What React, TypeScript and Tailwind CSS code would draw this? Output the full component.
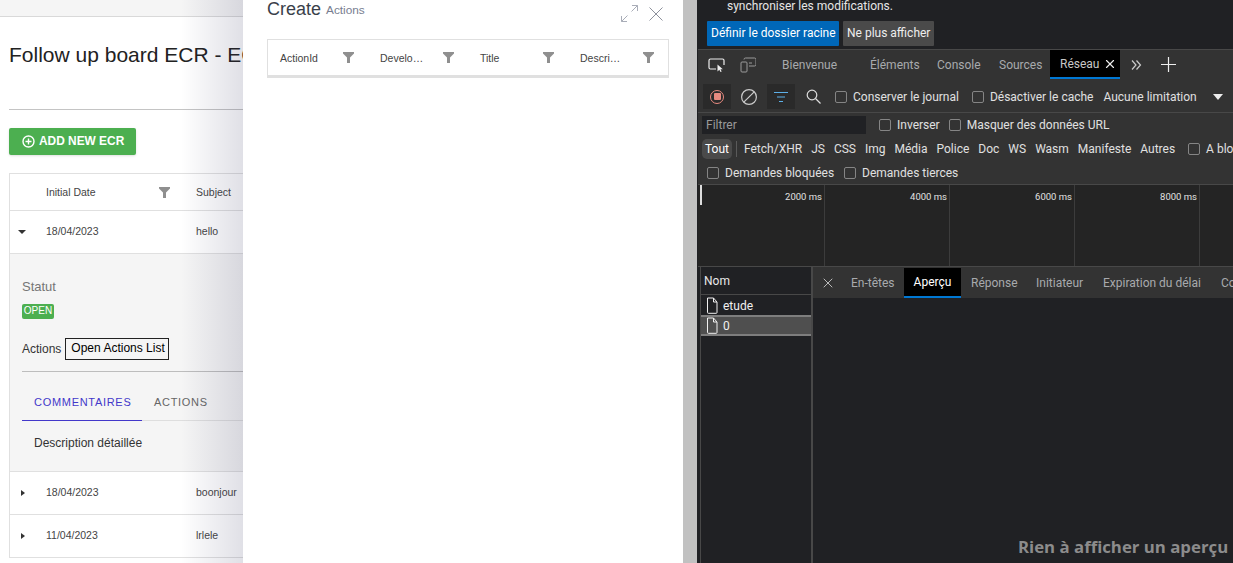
import { X } from "lucide-react";

function Funnel({ className = "" }: { className?: string }) {
  return (
    <svg width="11" height="11" viewBox="0 0 11 11" className={className}>
      <path d="M0 0h11v1.5L7 5.5V11H4V5.5L0 1.5z" fill="#8f8f8f" />
    </svg>
  );
}

function Check({ label }: { label: string }) {
  return (
    <label className="flex items-center gap-[6px] whitespace-nowrap">
      <span className="w-[12px] h-[12px] rounded-[2px] border border-[#858585] shrink-0" />
      {label}
    </label>
  );
}

function FileIcon() {
  return (
    <svg width="12" height="17" viewBox="0 0 12 17" fill="none" stroke="#f0f0f0" strokeWidth="1" className="shrink-0">
      <path d="M1.5 1h6l3.5 4v10.5a.8.8 0 0 1-.8.8H2.3a.8.8 0 0 1-.8-.8z" />
      <path d="M7.5 1v4H11" />
    </svg>
  );
}

function Row({ date, subject, open }: { date: string; subject: string; open?: boolean }) {
  return (
    <div className="h-[43px] shrink-0 flex items-center border-b border-[#e0e0e0] bg-white">
      <div className="w-[36px] pl-[8px] shrink-0">
        {open ? (
          <div className="w-0 h-0 border-x-[4px] border-x-transparent border-t-[4px] border-t-[#333]" />
        ) : (
          <div className="ml-[3px] w-0 h-0 border-y-[3px] border-y-transparent border-l-[4px] border-l-[#333]" />
        )}
      </div>
      <div className="w-[150px] shrink-0 text-[#444]">{date}</div>
      <div className="text-[#444]">{subject}</div>
    </div>
  );
}

function PageBehind() {
  return (
    <div className="w-[243px] shrink-0 relative overflow-hidden bg-white font-['Liberation_Sans',sans-serif] text-[10.5px]">
      <div className="w-[500px]">
        <div className="h-[17px] bg-[#f5f5f5] border-b border-[#d9d9d9]" />
        <h1 className="mt-[26px] pl-[9px] h-[24px] leading-[24px] text-[21px] text-[#222] whitespace-nowrap">
          Follow up board ECR - ECR
        </h1>
        <div className="mt-[42px] ml-[9px] border-t border-[#c4c4c4]" />
        <button className="mt-[18px] ml-[9px] w-[127px] h-[27px] bg-[#4caf50] rounded-[2px] shadow-sm text-white font-bold text-[11.9px] flex items-center pl-[13px] gap-[4px]">
          <svg width="13" height="13" viewBox="0 0 13 13" fill="none" stroke="white" strokeWidth="1.4">
            <circle cx="6.5" cy="6.5" r="5.5" />
            <path d="M6.5 3.5v6M3.5 6.5h6" />
          </svg>
          ADD NEW ECR
        </button>
        <div className="mt-[18px] ml-[9px] border-l border-t border-[#e0e0e0]">
          <div className="h-[37px] pt-[1px] flex items-center border-b border-[#e0e0e0] text-[#444]">
            <div className="w-[36px] shrink-0" />
            <div className="w-[150px] shrink-0 flex items-center">
              <span className="w-[113px]">Initial Date</span>
              <Funnel />
            </div>
            <div>Subject</div>
          </div>
          <Row date="18/04/2023" subject="hello" open />
          <div className="h-[218px] bg-[#f5f5f5] border-b border-[#e0e0e0] pl-[12px] pt-[25px]">
            <div className="text-[13px] leading-[16px] text-[#757575]">Statut</div>
            <div className="mt-[9px] w-[32px] h-[15px] rounded-[2px] bg-[#4caf50] text-white text-[10px] leading-[14px] text-center">
              OPEN
            </div>
            <div className="mt-[19px] flex items-center gap-[4px] text-[12px] text-[#333]">
              <span>Actions</span>
              <span className="border border-[#222] w-[104px] h-[22px] pl-[5px] leading-[19px] text-black whitespace-nowrap">
                Open Actions List
              </span>
            </div>
            <div className="mt-[11px] border-t border-[#bdbdbd]" />
            <div className="flex border-b border-[#dedede] h-[49px] text-[11px] tracking-[0.7px]">
              <div className="w-[120px] border-b border-[#4338ca] -mb-px pl-[12px] pt-[12px] flex items-center text-[#4338ca]">
                COMMENTAIRES
              </div>
              <div className="pl-[12px] pt-[12px] flex items-center text-[#666]">ACTIONS</div>
            </div>
            <div className="pl-[12px] mt-[14px] text-[12px] leading-[16px] text-[#333]">Description détaillée</div>
          </div>
          <Row date="18/04/2023" subject="boonjour" />
          <Row date="11/04/2023" subject="lrlele" />
        </div>
      </div>
      <div className="absolute inset-y-0 right-0 w-[62px] bg-gradient-to-r from-transparent to-[#30305a]/15" />
    </div>
  );
}

function Modal() {
  return (
    <div className="w-[440px] shrink-0 bg-white relative pl-[24px] pr-[14px] font-['Liberation_Sans',sans-serif]">
      <div className="h-[18px] flex items-center gap-[5px] whitespace-nowrap">
        <span className="text-[18px] leading-[18px] text-[#3a3f4a]">Create</span>
        <span className="text-[11.8px] leading-[18px] pt-[2px] text-[#777d90]">Actions</span>
      </div>
      <div className="absolute top-[5px] right-[20px] flex items-center gap-[11px]">
        <svg width="17" height="17" viewBox="0 0 17 17" fill="none" stroke="#a9adb8" strokeWidth="1">
          <path d="M11 .5h5.5V6M16.5.5 10.5 6.5M.5 11v5.5H6M.5 16.5l6-6" />
        </svg>
        <svg width="14" height="14" viewBox="0 0 14 14" stroke="#8d919c" strokeWidth="1">
          <path d="M.5.5l13 13M13.5.5l-13 13" />
        </svg>
      </div>
      <div className="mt-[21px] h-[39px] border border-[#e0e0e0] border-b-[3px] flex items-center text-[10.5px] text-[#444]">
        {["ActionId", "Develo…", "Title", "Descri…"].map((h) => (
          <div key={h} className="w-[100px] pl-[12px] flex items-center shrink-0">
            <span className="w-[63px] pt-[3px]">{h}</span>
            <Funnel />
          </div>
        ))}
      </div>
    </div>
  );
}

function DevTools() {
  return (
    <div className="flex-1 min-w-0 overflow-hidden bg-[#202124] border-l border-[#202124] text-[#cfd1d4] font-['Roboto',sans-serif] text-[12px] flex flex-col">
      <div className="h-[50px] shrink-0 pl-[9px] border-b border-[#484848] whitespace-nowrap">
        <div className="pl-[20px] h-[13px] leading-[12px] text-[#e6e6e6]">synchroniser les modifications.</div>
        <div className="mt-[8px] flex gap-[4px] text-white">
          <div className="h-[25px] leading-[25px] pl-[4px] w-[132px] bg-[#0067b8] rounded-[1px]">Définir le dossier racine</div>
          <div className="h-[25px] leading-[25px] pl-[4px] w-[91px] bg-[#4a4a4a] rounded-[1px] text-[#eee]">Ne plus afficher</div>
        </div>
      </div>
      <div className="h-[31px] pb-[2px] shrink-0 bg-[#333333] flex items-center whitespace-nowrap text-[#a8aaad]">
        <svg width="18" height="16" viewBox="0 0 18 16" fill="none" stroke="#eee" strokeWidth="1.2" className="ml-[10px] shrink-0">
          <path d="M8 12H2.5A1.5 1.5 0 0 1 1 10.5v-7A1.5 1.5 0 0 1 2.5 2h12A1.5 1.5 0 0 1 16 3.5V8" />
          <path d="M9.5 7.5v7l1.8-1.7 1.2 2.2 1.2-.6-1.2-2.1h2.3z" fill="#eee" stroke="none" />
        </svg>
        <svg width="16" height="16" viewBox="0 0 16 16" fill="none" stroke="#9b9b9b" strokeWidth="1" className="ml-[14px] shrink-0">
          <rect x="1" y="5" width="6" height="10" rx="1" />
          <path d="M4 2.5A1.5 1.5 0 0 1 5.5 1h9A1.5 1.5 0 0 1 16 2.5v5A1.5 1.5 0 0 1 14.5 9H9M9 6h3" />
        </svg>
        <span className="ml-[26px] w-[54px]">Bienvenue</span>
        <span className="ml-[34px] w-[47px]">Éléments</span>
        <span className="ml-[20px] w-[42px]">Console</span>
        <span className="ml-[20px] w-[42px]">Sources</span>
        <div className="ml-[9px] h-[29px] w-[70px] bg-black border-b-[2px] border-[#0078d4] flex items-center pl-[10px] text-[#c8c8c8]">
          <span className="w-[37px]">Réseau</span>
          <X size={14} strokeWidth={2} color="#eee" className="ml-[6px] shrink-0" />
        </div>
        <svg width="11" height="10" viewBox="0 0 11 10" fill="none" stroke="#ccc" strokeWidth="1.2" className="ml-[11px] shrink-0">
          <path d="m1 .5 4 4.5-4 4.5M5.5.5l4 4.5-4 4.5" />
        </svg>
        <svg width="15" height="15" viewBox="0 0 15 15" stroke="#eee" strokeWidth="1.2" className="ml-[19px] shrink-0">
          <path d="M7.5 0v15M0 7.5h15" />
        </svg>
      </div>
      <div className="h-[32px] shrink-0 bg-[#333333] border-b border-[#484848] flex items-center whitespace-nowrap text-[#e0e0e0]">
        <div className="ml-[5px] w-[28px] h-[25px] bg-[#2a2a2a] flex items-center justify-center">
          <div className="w-[14px] h-[14px] rounded-full border-[1.5px] border-[#e88a80] flex items-center justify-center">
            <div className="w-[7px] h-[7px] bg-[#e88a80] rounded-[1px]" />
          </div>
        </div>
        <svg width="18" height="18" viewBox="0 0 18 18" fill="none" stroke="#ccc" strokeWidth="1.2" className="ml-[9px] shrink-0">
          <circle cx="9" cy="9" r="7.4" />
          <path d="M3.8 14.2 14.2 3.8" />
        </svg>
        <div className="ml-[9px] w-[28px] h-[25px] bg-[#2a2a2a] flex items-center justify-center">
          <svg width="16" height="12" viewBox="0 0 16 12" stroke="#5db0e8" strokeWidth="1">
            <path d="M1 1.5h14M4 6h8M6 10.5h4" />
          </svg>
        </div>
        <svg width="15" height="15" viewBox="0 0 15 15" fill="none" stroke="#ddd" strokeWidth="1.2" className="ml-[11px] shrink-0">
          <circle cx="6" cy="6" r="4.8" />
          <path d="m9.5 9.5 5 5" />
        </svg>
        <div className="ml-[14px] flex items-center gap-[13px]">
          <Check label="Conserver le journal" />
          <Check label="Désactiver le cache" />
        </div>
        <span className="ml-[10px] w-[93px]">Aucune limitation</span>
        <div className="ml-[17px] w-0 h-0 border-x-[5px] border-x-transparent border-t-[6px] border-t-[#eee]" />
      </div>
      <div className="h-[24px] shrink-0 bg-[#333333] flex items-center whitespace-nowrap text-[#e0e0e0]">
        <div className="ml-[4px] w-[164px] h-[18px] bg-[#202124] pl-[4px] leading-[19px] text-[#9a9a9a]">Filtrer</div>
        <div className="ml-[13px] flex items-center gap-[9px]">
          <Check label="Inverser" />
          <Check label="Masquer des données URL" />
        </div>
      </div>
      <div className="h-[24px] shrink-0 bg-[#333333] flex items-center whitespace-nowrap text-[#e0e0e0]">
        <div className="ml-[4px] w-[30px] shrink-0 h-[20px] rounded-[5px] bg-[#4a4a4a] text-center leading-[20px] text-white">Tout</div>
        <div className="ml-[4px] h-[16px] border-l border-[#5a5a5a] shrink-0" />
        <div className="ml-[7px] flex gap-[9px]">
          {["Fetch/XHR", "JS", "CSS", "Img", "Média", "Police", "Doc", "WS", "Wasm", "Manifeste", "Autres"].map((t) => (
            <span key={t}>{t}</span>
          ))}
        </div>
        <div className="ml-[13px]">
          <Check label="A bloqué les cookies" />
        </div>
      </div>
      <div className="h-[24px] shrink-0 bg-[#333333] border-b border-[#484848] pl-[9px] flex items-center gap-[10px] whitespace-nowrap text-[#e0e0e0]">
        <Check label="Demandes bloquées" />
        <Check label="Demandes tierces" />
      </div>
      <div className="h-[82px] shrink-0 bg-[#242424] border-b border-[#484848] pl-[2px] flex text-[9.5px] text-[#e0e0e0]">
        <div className="w-[124px] border-l-2 border-l-[#ddd] h-[20px] flex justify-end shrink-0">
          <span className="pr-[2px] pt-[4px] leading-[15px]">2000 ms</span>
        </div>
        <div className="h-full border-r border-[#3c3c3c]" />
        {["4000 ms", "6000 ms", "8000 ms", ""].map((t) => (
          <div key={t} className="w-[125px] shrink-0 border-r border-[#3c3c3c] text-right pr-[2px] pt-[4px] leading-[15px]">
            {t}
          </div>
        ))}
      </div>
      <div className="flex-1 flex min-h-0 pl-[2px]">
        <div className="w-[113px] shrink-0 border-l border-r-[2px] border-[#484848]">
          <div className="h-[28px] border-b border-[#484848] pl-[3px] leading-[29px] text-[#e8e8e8]">Nom</div>
          <div className="h-[20px] pt-[1px] flex items-center pl-[5px] gap-[5px] text-[#f0f0f0]">
            <FileIcon />
            etude
          </div>
          <div className="h-[21px] flex items-center pl-[5px] gap-[5px] text-[#f0f0f0] bg-[#4f4f4f] border-y-[2px] border-[#7e7e7e]">
            <FileIcon />0
          </div>
        </div>
        <div className="flex-1 min-w-0 flex flex-col">
          <div className="h-[31px] pt-[1px] shrink-0 bg-[#333333] flex items-center whitespace-nowrap text-[#a8aaad]">
            <X size={16} strokeWidth={1.2} color="#ddd" className="ml-[7px] shrink-0" />
            <span className="ml-[15px] w-[43px]">En-têtes</span>
            <div className="ml-[10px] w-[57px] h-[30px] bg-black border-b-[2px] border-[#0078d4] text-center leading-[29px] text-white shrink-0">
              Aperçu
            </div>
            <span className="ml-[10px] w-[45px]">Réponse</span>
            <span className="ml-[20px] w-[47px]">Initiateur</span>
            <span className="ml-[20px] w-[98px]">Expiration du délai</span>
            <span className="ml-[20px]">Cookies</span>
          </div>
          <div className="flex-1 pt-[238px] pl-[205px] whitespace-nowrap font-['Open_Sans',sans-serif] font-bold text-[16.8px] leading-[22px] text-[#8c8c8c]">
            Rien à afficher un aperçu
          </div>
        </div>
      </div>
    </div>
  );
}

export default function App() {
  return (
    <div className="w-[1233px] h-[563px] overflow-hidden flex bg-white">
      <PageBehind />
      <Modal />
      <div className="w-[14px] shrink-0 bg-[#c1c1c1]" />
      <DevTools />
    </div>
  );
}
